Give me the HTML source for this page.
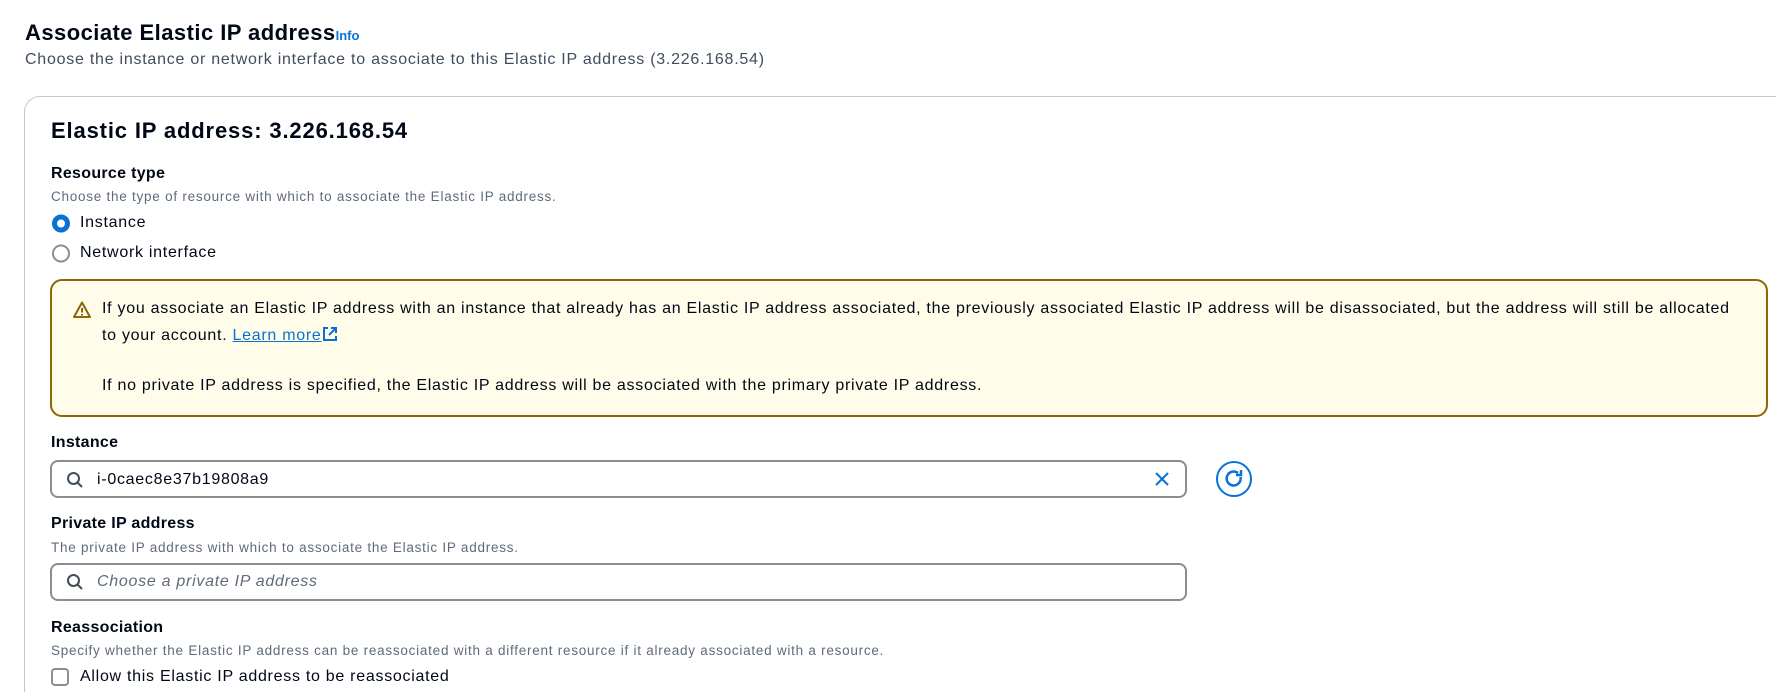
<!DOCTYPE html>
<html><head><meta charset="utf-8"><style>
*{box-sizing:border-box;margin:0;padding:0}
html,body{width:1776px;height:692px;overflow:hidden;background:#fff}
body{font-family:"Liberation Sans",sans-serif;color:#000716}
#w{position:relative;width:1776px;height:692px;overflow:hidden}
.a{position:absolute;white-space:nowrap}
.h1{font-size:22px;font-weight:bold;left:25px;top:20px;letter-spacing:0.45px}
.info{font-size:13px;color:#0972d3;font-weight:bold;letter-spacing:0}
.sub{font-size:16px;color:#414d5c;left:25px;top:51px;letter-spacing:0.75px}
.card{position:absolute;left:24px;top:96px;width:1752px;height:596px;border:1px solid #c6c6cd;border-right:none;border-bottom:none;border-radius:16px 0 0 0}
.h2{font-size:22px;font-weight:bold;left:51px;top:118px;letter-spacing:0.85px}
.lbl{font-size:16px;font-weight:bold;left:51px;letter-spacing:0.3px}
.desc{font-size:13.5px;color:#5f6b7a;left:51px;letter-spacing:0.75px}
.t{font-size:16px;letter-spacing:0.72px}
.alert{position:absolute;left:50px;top:279px;width:1718px;height:138px;border:2px solid #8d6605;border-radius:12px;background:#fffce9}
.inp{position:absolute;left:50px;width:1137px;height:38px;border:2px solid #8c8c94;border-radius:8px}
a{color:#0972d3}
</style></head><body><div id="w">
<div class="a h1">Associate Elastic IP address<span class="info">Info</span></div>
<div class="a sub">Choose the instance or network interface to associate to this Elastic IP address (3.226.168.54)</div>
<div class="card"></div>
<div class="a h2">Elastic IP address: 3.226.168.54</div>
<div class="a lbl" style="top:165px">Resource type</div>
<div class="a desc" style="top:189px">Choose the type of resource with which to associate the Elastic IP address.</div>
<svg class="a" style="left:51px;top:214px" width="20" height="20"><circle cx="10" cy="9.5" r="6.5" fill="#fff" stroke="#0972d3" stroke-width="5"/></svg>
<div class="a t" style="left:80px;top:214px">Instance</div>
<svg class="a" style="left:51px;top:244px" width="20" height="20"><circle cx="10" cy="9.5" r="8" fill="#fff" stroke="#8c8c94" stroke-width="2"/></svg>
<div class="a t" style="left:80px;top:244px">Network interface</div>
<div class="alert"></div>
<svg class="a" style="left:72px;top:300px" width="20" height="20" viewBox="0 0 20 20"><path d="M10 2.5L18 17H2Z" fill="none" stroke="#8d6605" stroke-width="2" stroke-linejoin="round"/><path d="M10 8v4.5M10 14v1.5" stroke="#8d6605" stroke-width="2"/></svg>
<div class="a t" style="left:102px;top:300px">If you associate an Elastic IP address with an instance that already has an Elastic IP address associated, the previously associated Elastic IP address will be disassociated, but the address will still be allocated</div>
<div class="a t" style="left:102px;top:326px">to your account. <a href="#">Learn more</a><svg width="16" height="16" viewBox="0 0 16 16" style="vertical-align:-2px"><path d="M6 2H2v12h12v-4M9 2h5v5M14 2L7 9" fill="none" stroke="#0972d3" stroke-width="2"/></svg></div>
<div class="a t" style="left:102px;top:377px">If no private IP address is specified, the Elastic IP address will be associated with the primary private IP address.</div>
<div class="a lbl" style="top:434px">Instance</div>
<div class="inp" style="top:460px"></div>
<svg class="a" style="left:66px;top:471px" width="18" height="18" viewBox="0 0 18 18"><circle cx="7.5" cy="7.5" r="5.5" fill="none" stroke="#414d5c" stroke-width="2"/><path d="M11.5 11.5L16 16" stroke="#414d5c" stroke-width="2"/></svg>
<div class="a t" style="left:97px;top:471px">i-0caec8e37b19808a9</div>
<svg class="a" style="left:1154px;top:471px" width="16" height="16" viewBox="0 0 16 16"><path d="M2 2L14 14M14 2L2 14" stroke="#0972d3" stroke-width="2"/></svg>
<svg class="a" style="left:1215px;top:460px" width="38" height="38" viewBox="0 0 38 38"><circle cx="19" cy="19" r="17" fill="none" stroke="#0972d3" stroke-width="2"/><path d="M25.5 17A7 7 0 1 1 23 13" fill="none" stroke="#0972d3" stroke-width="2.5"/><path d="M26 10v5h-5" fill="none" stroke="#0972d3" stroke-width="2.5"/></svg>
<div class="a lbl" style="top:515px">Private IP address</div>
<div class="a desc" style="top:540px">The private IP address with which to associate the Elastic IP address.</div>
<div class="inp" style="top:563px"></div>
<svg class="a" style="left:66px;top:573px" width="18" height="18" viewBox="0 0 18 18"><circle cx="7.5" cy="7.5" r="5.5" fill="none" stroke="#414d5c" stroke-width="2"/><path d="M11.5 11.5L16 16" stroke="#414d5c" stroke-width="2"/></svg>
<div class="a t" style="left:97px;top:573px;font-style:italic;color:#5f6b7a">Choose a private IP address</div>
<div class="a lbl" style="top:619px">Reassociation</div>
<div class="a desc" style="top:643px">Specify whether the Elastic IP address can be reassociated with a different resource if it already associated with a resource.</div>
<div class="a" style="left:51px;top:668px;width:18px;height:18px;border:2px solid #8c8c94;border-radius:4px"></div>
<div class="a t" style="left:80px;top:668px;line-height:18px">Allow this Elastic IP address to be reassociated</div>
</div></body></html>
